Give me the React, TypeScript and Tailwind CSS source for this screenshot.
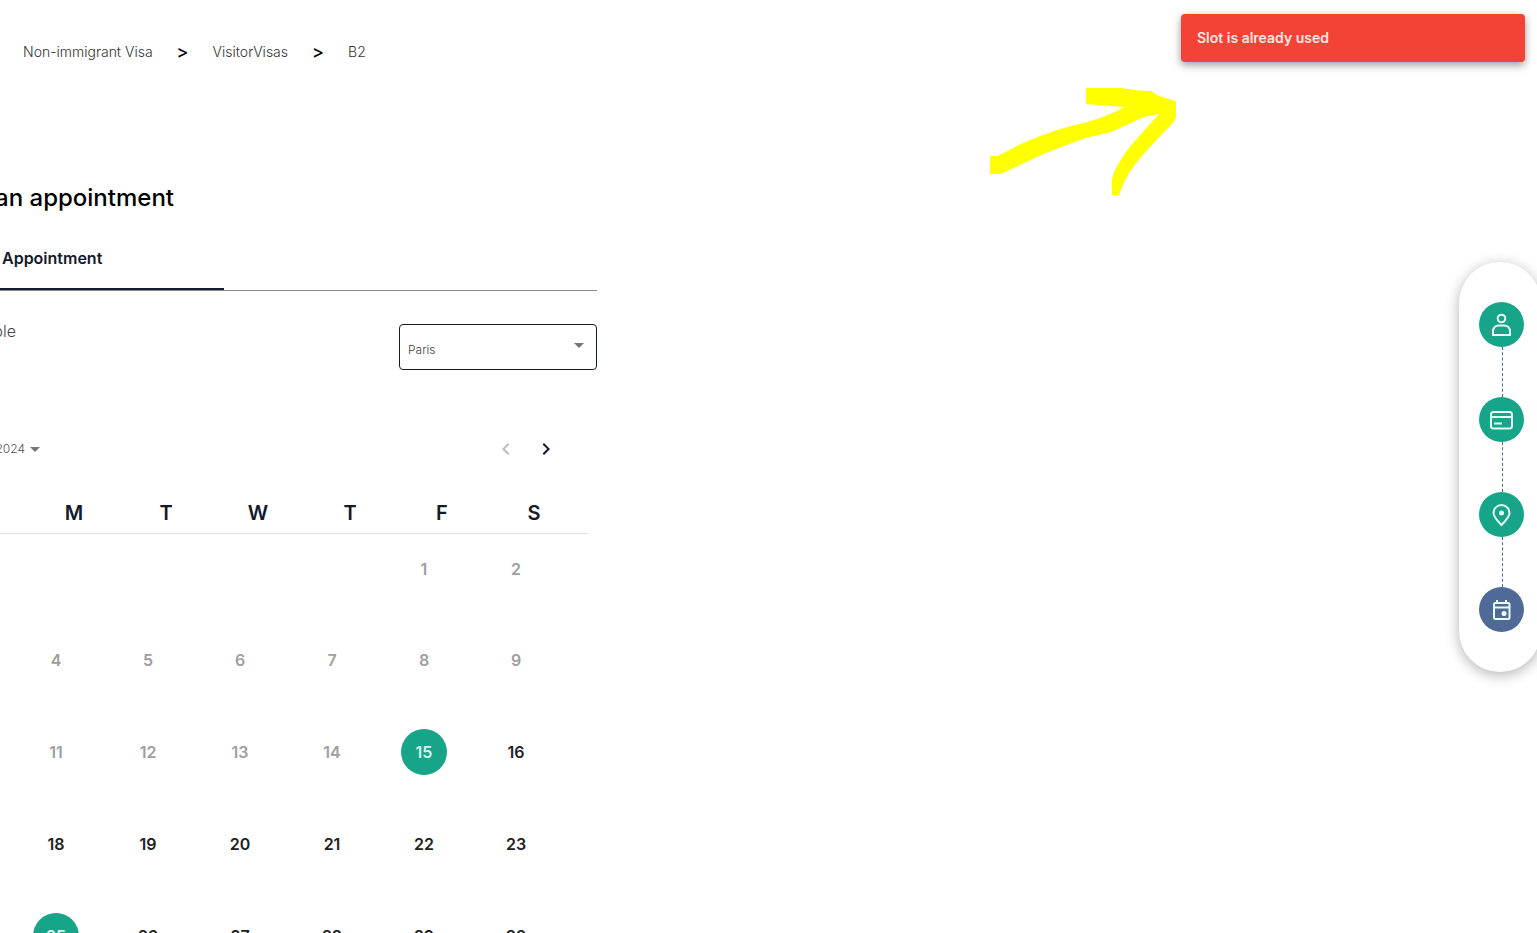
import type { ReactNode } from "react";

const weekdays = [
  { short: "M", name: "Monday" },
  { short: "T", name: "Tuesday" },
  { short: "W", name: "Wednesday" },
  { short: "T", name: "Thursday" },
  { short: "F", name: "Friday" },
  { short: "S", name: "Saturday" },
];

const weeks: (number | null)[][] = [
  [null, null, null, null, 1, 2],
  [4, 5, 6, 7, 8, 9],
  [11, 12, 13, 14, 15, 16],
  [18, 19, 20, 21, 22, 23],
  [25, 26, 27, 28, 29, 30],
];

const highlighted = [15, 25];

function dayStyle(day: number) {
  if (highlighted.includes(day)) return "bg-[#17a589] text-[#d9f5ee]";
  if (day < 15) return "text-[#9e9e9e]";
  return "text-[#212121]";
}

function Breadcrumb() {
  return (
    <nav aria-label="Breadcrumb" className="flex h-6 items-center gap-6 pl-[23px] text-sm font-light text-[#333]">
      <a href="#non-immigrant">Non-immigrant Visa</a>
      <span className="text-lg leading-5 font-medium text-black">&gt;</span>
      <a href="#visitor">VisitorVisas</a>
      <span className="text-lg leading-5 font-medium text-black">&gt;</span>
      <a href="#b2">B2</a>
    </nav>
  );
}

function CityField() {
  return (
    <div className="relative h-[46px] w-[198px]">
      <select
        aria-label="City"
        className="h-full w-full appearance-none rounded border border-[#121a2b] bg-white pt-1.5 pl-2 text-xs font-light text-[#444]"
      >
        <option>Paris</option>
      </select>
      <svg className="pointer-events-none absolute top-[19px] right-[13px] h-[5px] w-[10px]" viewBox="0 0 10 5">
        <path d="M0 0h10L5 5z" fill="#757575" />
      </svg>
    </div>
  );
}

function Calendar() {
  return (
    <section aria-label="Calendar" className="w-[588px]">
      <div className="flex h-10 items-center justify-between pr-[22px]">
        <div className="flex w-10 justify-end">
          <button className="flex items-center gap-[5px] text-xs font-light text-[#555]">
            2024
            <svg className="h-[5px] w-[10px]" viewBox="0 0 10 5">
              <path d="M0 0h10L5 5z" fill="#757575" />
            </svg>
          </button>
        </div>
        <div className="flex">
          <button aria-label="Previous month" disabled className="flex h-10 w-10 items-center justify-center text-[#bdbdbd]">
            <svg className="h-6 w-6" viewBox="0 0 24 24" fill="currentColor">
              <path d="M15.41 7.41 14 6l-6 6 6 6 1.41-1.41L10.83 12z" />
            </svg>
          </button>
          <button aria-label="Next month" className="flex h-10 w-10 items-center justify-center text-[#121a2b]">
            <svg className="h-6 w-6" viewBox="0 0 24 24" fill="currentColor">
              <path d="M10 6 8.59 7.41 13.17 12l-4.58 4.59L10 18l6-6z" />
            </svg>
          </button>
        </div>
      </div>
      <table className="mt-6 w-full table-fixed border-collapse">
        <colgroup>
          <col className="w-7" />
          <col className="w-[92px]" />
          <col className="w-[92px]" />
          <col className="w-[92px]" />
          <col className="w-[92px]" />
          <col className="w-[92px]" />
          <col className="w-[100px]" />
        </colgroup>
        <thead>
          <tr className="border-b border-[#e0e0e0]">
            <td />
            {weekdays.map((d) => (
              <th key={d.name} scope="col" abbr={d.name} className="h-10 p-0 text-xl leading-6 font-semibold text-[#121a2b] last:pr-2">
                {d.short}
              </th>
            ))}
          </tr>
        </thead>
        <tbody>
          {weeks.map((week, i) => (
            <tr key={i}>
              <td />
              {week.map((day, j) => (
                <td key={j} className="h-[92px] px-[5px] pt-3 align-top">
                  {day !== null && (
                    <button
                      disabled={day < 15}
                      className={`flex h-[46px] w-[46px] items-center justify-center rounded-full text-base font-semibold ${dayStyle(day)}`}
                    >
                      {day}
                    </button>
                  )}
                </td>
              ))}
            </tr>
          ))}
        </tbody>
      </table>
    </section>
  );
}

function Step({ label, current, children }: { label: string; current?: boolean; children: ReactNode }) {
  return (
    <li className="group">
      <button
        aria-label={label}
        className={`flex h-[45px] w-[45px] items-center justify-center rounded-full ${current ? "bg-[#4f6a97]" : "bg-[#17a589]"}`}
      >
        <svg className="h-[25px] w-[25px]" viewBox="0 0 25 25" fill="none" stroke="#e9fbf6" strokeWidth="2">
          {children}
        </svg>
      </button>
      <div className="ml-[23px] h-[50px] border-l border-dashed border-[#4f6a97] group-last:hidden" />
    </li>
  );
}

function StepRail() {
  return (
    <ol className="absolute top-[262px] -right-1 w-[82px] rounded-full bg-white py-10 pl-5 shadow-[0_3px_14px_rgba(0,0,0,0.3)]">
      <Step label="Applicant">
        <circle cx="12.5" cy="6.5" r="3.8" />
        <path d="M4 23v-4a5.500 5.500 0 0 1 5.500-5.500h6a5.500 5.500 0 0 1 5.500 5.500v4z" />
      </Step>
      <Step label="Payment">
        <rect x="2" y="5" width="21" height="16.500" rx="2.500" />
        <path d="M2 10h21M5 16.500h8" />
      </Step>
      <Step label="Location">
        <path d="M12.500 23C8.500 19 4.500 15 4.500 11a8 8 0 0 1 16 0c0 4-4 8-8 12z" />
        <circle cx="12.500" cy="11" r="2.500" fill="#e9fbf6" stroke="none" />
      </Step>
      <Step label="Appointment" current>
        <rect x="5" y="6" width="15.500" height="16" rx="1.500" />
        <path d="M5 10.500h15.500M8 3v3M17 3v3" />
        <circle cx="15" cy="16.500" r="2.500" fill="#fff" stroke="none" />
      </Step>
    </ol>
  );
}

function Arrow() {
  return (
    <svg className="absolute top-[88px] right-[361px] h-[107px] w-[186px]" viewBox="990 88 186 107" aria-hidden="true">
      <path
        fill="#ffff00"
        d="M1086 88H1121L1138 90.500L1151 91L1158 95.500L1176 101.500V117Q1175 121 1171 125L1149 148Q1136 162 1129 173Q1123 183 1119 195H1112V180Q1114 170 1119 163Q1125 152 1133 143L1159 114L1144 117L1111 132Q1100 135 1089 137Q1062 146 1039 156L1003 173L999 174H990V156H998L1021 144Q1045 133 1071 126Q1085 123 1097 119Q1112 114 1124 107L1086 104Z"
      />
    </svg>
  );
}

export default function App() {
  return (
    <div className="relative h-screen overflow-hidden bg-white pt-10 font-['Inter',sans-serif]">
      <Breadcrumb />
      <main className="w-full max-w-[597px] pt-[118px]">
        <div className="flex w-[174px] justify-end">
          <h1 className="text-2xl leading-8 font-medium whitespace-nowrap text-black">an appointment</h1>
        </div>
        <div role="tablist" className="mt-[34px] flex border-b border-[#858a98]">
          <button
            role="tab"
            aria-selected="true"
            className="h-[42px] w-[224px] border-b-2 border-[#121a2b] pb-5 pl-0.5 text-left text-base leading-5 font-semibold text-[#121a2b]"
          >
            Appointment
          </button>
        </div>
        <div className="mt-[33px] flex justify-between">
          <p className="flex w-4 justify-end text-base leading-[14px] font-light text-[#444]">ble</p>
          <CityField />
        </div>
        <div className="mt-[59px]">
          <Calendar />
        </div>
      </main>
      <Arrow />
      <div
        role="alert"
        className="absolute top-[14px] right-3 flex h-12 w-[344px] items-center rounded bg-[#f44336] px-4 text-sm font-semibold text-[#fde8e6] shadow-[0_3px_8px_rgba(0,0,0,0.4)]"
      >
        Slot is already used
      </div>
      <StepRail />
    </div>
  );
}
